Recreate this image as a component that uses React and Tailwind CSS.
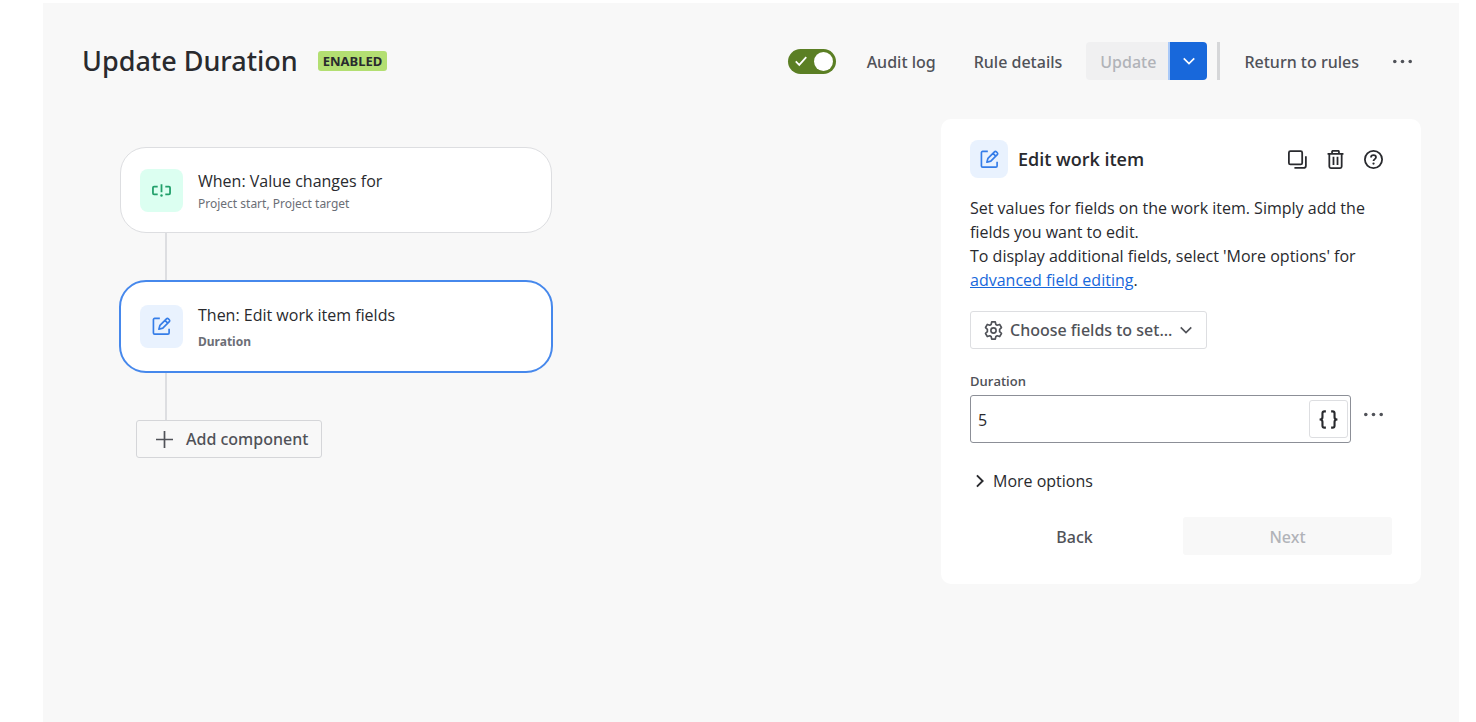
import { useState } from "react";

function Svg({ className = "size-[19px]", children, width = 1.5 }) {
  return (
    <svg
      viewBox="0 0 16 16"
      className={`shrink-0 ${className}`}
      fill="none"
      stroke="currentColor"
      strokeWidth={width}
      aria-hidden="true"
    >
      {children}
    </svg>
  );
}

const EditIcon = () => (
  <Svg width={1.4}>
    <path d="M6.6 1.2H2.2a1 1 0 0 0-1 1v11.200a1 1 0 0 0 1 1h11.200a1 1 0 0 0 1-1V9.8" />
    <path strokeLinejoin="round" d="M5.800 10.300 6.700 7l5.450-5.450a1.150 1.150 0 0 1 1.630 0l.78.78a1.150 1.150 0 0 1 0 1.630L9.100 9.400 5.800 10.300ZM10.900 2.800l2.400 2.400" />
  </Svg>
);

const ValueChangeIcon = () => (
  <Svg>
    <path d="M4.800 4.700H1.700a.9.9 0 0 0-.9.9v4.800c0 .5.4.9.9.9h3.100M11.200 4.700h3.100c.5 0 .9.4.9.9v4.800c0 .5-.4.9-.9.9h-3.100M8 2.800v6.700" />
    <circle cx="8" cy="12.300" r="1.050" fill="currentColor" stroke="none" />
  </Svg>
);

const CopyIcon = () => (
  <Svg>
    <rect x="0.75" y="0.95" width="11.2" height="11.2" rx="1.3" />
    <path d="M15.05 5.2v8a1.9 1.9 0 0 1-1.9 1.9H5.4" />
  </Svg>
);

const TrashIcon = () => (
  <Svg>
    <path d="M1.3 3.2h13.4M5.1 3V1.4c0-.4.3-.7.7-.7h4.4c.4 0 .7.3.7.7V3M2.8 3.2v10.7c0 .7.6 1.3 1.3 1.3h7.8c.7 0 1.3-.6 1.3-1.3V3.2M6.3 5.6v7M9.7 5.6v7" />
  </Svg>
);

const HelpIcon = () => (
  <Svg>
    <circle cx="8" cy="8" r="7.25" />
    <path d="M5.9 6.4c0-1.2.9-2 2.1-2s2.1.8 2.1 1.8c0 1.5-2.1 1.5-2.1 3.1" />
    <circle cx="8" cy="11.4" r="0.95" fill="currentColor" stroke="none" />
  </Svg>
);

const GearIcon = () => (
  <Svg width={1.4}>
    <path
      strokeLinejoin="round"
      d="M6.500.8h3l.5 2.100 1.150.65 2.050-.65 1.500 2.600L13.150 7v2l1.550 1.500-1.500 2.600-2.050-.65L10 13.100l-.5 2.100h-3L6 13.100l-1.150-.65-2.050.65-1.500-2.600L2.850 9V7L1.300 5.500l1.500-2.600 2.050.65L6 2.900Z"
    />
    <circle cx="8" cy="8" r="2.2" />
  </Svg>
);

const BracesIcon = () => (
  <Svg width={1.6} className="size-[21px]">
    <path d="M6 1.800H4.900c-.9 0-1.500.6-1.500 1.500v2.900C3.400 7.300 2.700 8 1.200 8c1.500 0 2.200.7 2.200 1.800v2.900c0 .9.6 1.500 1.500 1.500H6M10 1.800h1.100c.9 0 1.500.6 1.500 1.500v2.900c0 1.100.7 1.800 2.200 1.800-1.500 0-2.200.7-2.200 1.800v2.900c0 .9-.6 1.500-1.500 1.500H10" />
  </Svg>
);

const DotsIcon = () => (
  <Svg className="size-[19px]">
    <g fill="currentColor" stroke="none">
      <circle cx="1.5" cy="8" r="1.5" />
      <circle cx="8" cy="8" r="1.5" />
      <circle cx="14.5" cy="8" r="1.5" />
    </g>
  </Svg>
);

const ChevronDown = () => (
  <Svg className="size-[14px]" width={1.9}>
    <path d="m2 5 6 6 6-6" />
  </Svg>
);

const ChevronRight = () => (
  <Svg className="size-[14px]" width={2.2}>
    <path d="m4.500 1.500 6.500 6.500-6.500 6.500" />
  </Svg>
);

const PlusIcon = () => (
  <Svg className="size-[17px]" width={1.6}>
    <path d="M8 0v16M0 8h16" />
  </Svg>
);

function HeaderButton({ children }) {
  return (
    <button type="button" className="h-[38px] rounded px-[14px] pt-px font-['Noto_Sans',sans-serif] font-medium text-[#505258]">
      {children}
    </button>
  );
}

function IconButton({ label, children }) {
  return (
    <button type="button" aria-label={label} className="grid h-[38px] w-[38px] place-items-center rounded">
      {children}
    </button>
  );
}

function RuleStep({ icon, tint, title, detail, selected }) {
  return (
    <button
      type="button"
      className={`flex items-center gap-[15px] bg-white text-left ${
        selected
          ? "h-[93px] w-[434px] rounded-[27px] border-2 border-[#4688ec] px-[19px]"
          : "mx-px h-[86px] w-[432px] rounded-[26px] border border-[#dddee1] px-[19px]"
      }`}
    >
      <span className={`grid size-[43px] shrink-0 place-items-center rounded-lg ${tint}`}>{icon}</span>
      <span className={`flex flex-col pt-[3px] text-[#292a2e] ${selected ? "gap-1" : ""}`}>
        <span className="leading-6">{title}</span>
        <span
          className={`font-['Noto_Sans',sans-serif] text-[12px] leading-[22px] text-[#6b6e76] ${
            selected ? "font-bold" : ""
          }`}
        >
          {detail}
        </span>
      </span>
    </button>
  );
}

export default function App() {
  const [enabled, setEnabled] = useState(true);
  const [duration, setDuration] = useState("5");

  return (
    <div className="min-h-screen bg-white pt-[3px] pr-[17px] pl-[43px] font-['Open_Sans','Noto_Sans',sans-serif] text-[16px] leading-6 text-[#292a2e]">
      <main className="min-h-[calc(100vh-3px)] bg-[#f8f8f8] pt-[39px] pr-[38px] pb-10 pl-[39px]">
        <header className="flex items-center justify-between">
          <div className="flex items-center gap-5">
            <h1 className="font-['Noto_Sans',sans-serif] text-[27px] leading-[38px] font-medium whitespace-nowrap">
              Update Duration
            </h1>
            <span className="rounded-[3px] bg-[#b3df72] px-[5px] font-['Noto_Sans',sans-serif] text-[13px] leading-5 font-bold text-[#292a2e]">
              ENABLED
            </span>
          </div>
          <div className="flex items-center gap-[10px] whitespace-nowrap">
            <label className="relative mr-[7px] flex h-[25px] w-[48px] items-center justify-between rounded-full bg-[#5b7f24] pr-[3px] pl-[6px] text-white">
              <input
                type="checkbox"
                role="switch"
                aria-label="Rule enabled"
                checked={enabled}
                onChange={(e) => setEnabled(e.target.checked)}
                className="absolute inset-0 size-full cursor-pointer opacity-0"
              />
              <Svg className="size-[14px]" width={2}>
                <path d="m2 8.500 4 4L14 3.500" />
              </Svg>
              <span className="size-[19px] rounded-full bg-white" />
            </label>
            <HeaderButton>Audit log</HeaderButton>
            <HeaderButton>Rule details</HeaderButton>
            <div className="flex h-[38px]">
              <button
                type="button"
                disabled
                className="rounded-l bg-[#f0f0f1] pt-px pr-3 pl-[14px] font-['Noto_Sans',sans-serif] font-medium text-[#b1b3b8]"
              >
                Update
              </button>
              <button
                type="button"
                aria-label="More update options"
                className="grid w-[39px] place-items-center rounded-r border-l-2 border-[#a9c9f8] bg-[#1868db] text-white"
              >
                <ChevronDown />
              </button>
            </div>
            <div className="h-[38px] w-[3px] bg-[#d6d7d9]" />
            <HeaderButton>Return to rules</HeaderButton>
            <div className="text-[#505258]">
              <IconButton label="More actions">
                <DotsIcon />
              </IconButton>
            </div>
          </div>
        </header>

        <div className="flex items-start justify-between pt-[39px]">
          <section aria-label="Rule steps" className="flex flex-col items-start pt-7 pl-[37px]">
            <RuleStep
              icon={<ValueChangeIcon />}
              tint="bg-[#dcfff1] text-[#22a06b]"
              title="When: Value changes for"
              detail="Project start, Project target"
            />
            <div className="ml-[46px] h-[47px] w-[2px] bg-[#dddee1]" />
            <RuleStep
              selected
              icon={<EditIcon />}
              tint="bg-[#e9f2fe] text-[#357de8]"
              title="Then: Edit work item fields"
              detail="Duration"
            />
            <div className="ml-[46px] h-[47px] w-[2px] bg-[#dddee1]" />
            <button
              type="button"
              className="ml-[17px] flex h-[38px] items-center gap-[13px] rounded-[3px] border border-[#d5d6d9] pr-[13px] pl-[19px] font-['Noto_Sans',sans-serif] font-medium text-[#505258]"
            >
              <PlusIcon />
              Add component
            </button>
          </section>

          <aside className="w-[480px] rounded-[10px] bg-white px-[29px] pt-[21px] pb-[29px]">
            <div className="flex items-center">
              <span className="grid size-[38px] place-items-center rounded-lg bg-[#e9f2fe] text-[#357de8]">
                <EditIcon />
              </span>
              <h2 className="ml-[10px] flex-1 text-[18px] font-semibold">Edit work item</h2>
              <IconButton label="Duplicate"><CopyIcon /></IconButton>
              <IconButton label="Delete"><TrashIcon /></IconButton>
              <IconButton label="Help"><HelpIcon /></IconButton>
            </div>

            <p className="mt-[18px]">
              Set values for fields on the work item. Simply add the fields you want to edit.
              <br />
              To display additional fields, select 'More options' for{" "}
              <a href="#advanced" className="text-[#1868db] underline">advanced field editing</a>.
            </p>

            <button
              type="button"
              className="mt-[19px] flex h-[38px] items-center gap-[7px] rounded-[3px] border border-[#dddee1] px-[13px] font-['Noto_Sans',sans-serif] font-medium text-[#505258]"
            >
              <GearIcon />
              Choose fields to set...
              <ChevronDown />
            </button>

            <label htmlFor="duration" className="mt-5 block text-[13px] font-semibold text-[#505258]">
              Duration
            </label>
            <div className="mt-[2px] flex items-start">
              <div className="flex h-12 min-w-0 flex-1 items-center rounded-[3px] border border-[#8c8f97] pr-[2px]">
                <input
                  id="duration"
                  value={duration}
                  onChange={(e) => setDuration(e.target.value)}
                  className="h-full min-w-0 flex-1 bg-transparent px-[7px] pt-[2px] outline-none"
                />
                <button
                  type="button"
                  aria-label="Insert smart value"
                  className="grid h-[38px] w-[39px] place-items-center rounded-[3px] border border-[#dddee1]"
                >
                  <BracesIcon />
                </button>
              </div>
              <div className="ml-[3px] text-[#505258]">
                <IconButton label="Field options">
                  <DotsIcon />
                </IconButton>
              </div>
            </div>

            <button type="button" className="mt-[26px] ml-[3px] flex items-center gap-[6px]">
              <ChevronRight />
              More options
            </button>

            <div className="mt-6 grid grid-cols-2 gap-1 font-['Noto_Sans',sans-serif]">
              <button type="button" className="h-[38px] rounded pt-px font-medium text-[#505258]">Back</button>
              <button type="button" disabled className="h-[38px] rounded-[3px] bg-[#f8f8f8] pt-px font-medium text-[#b1b3b8]">
                Next
              </button>
            </div>
          </aside>
        </div>
      </main>
    </div>
  );
}
